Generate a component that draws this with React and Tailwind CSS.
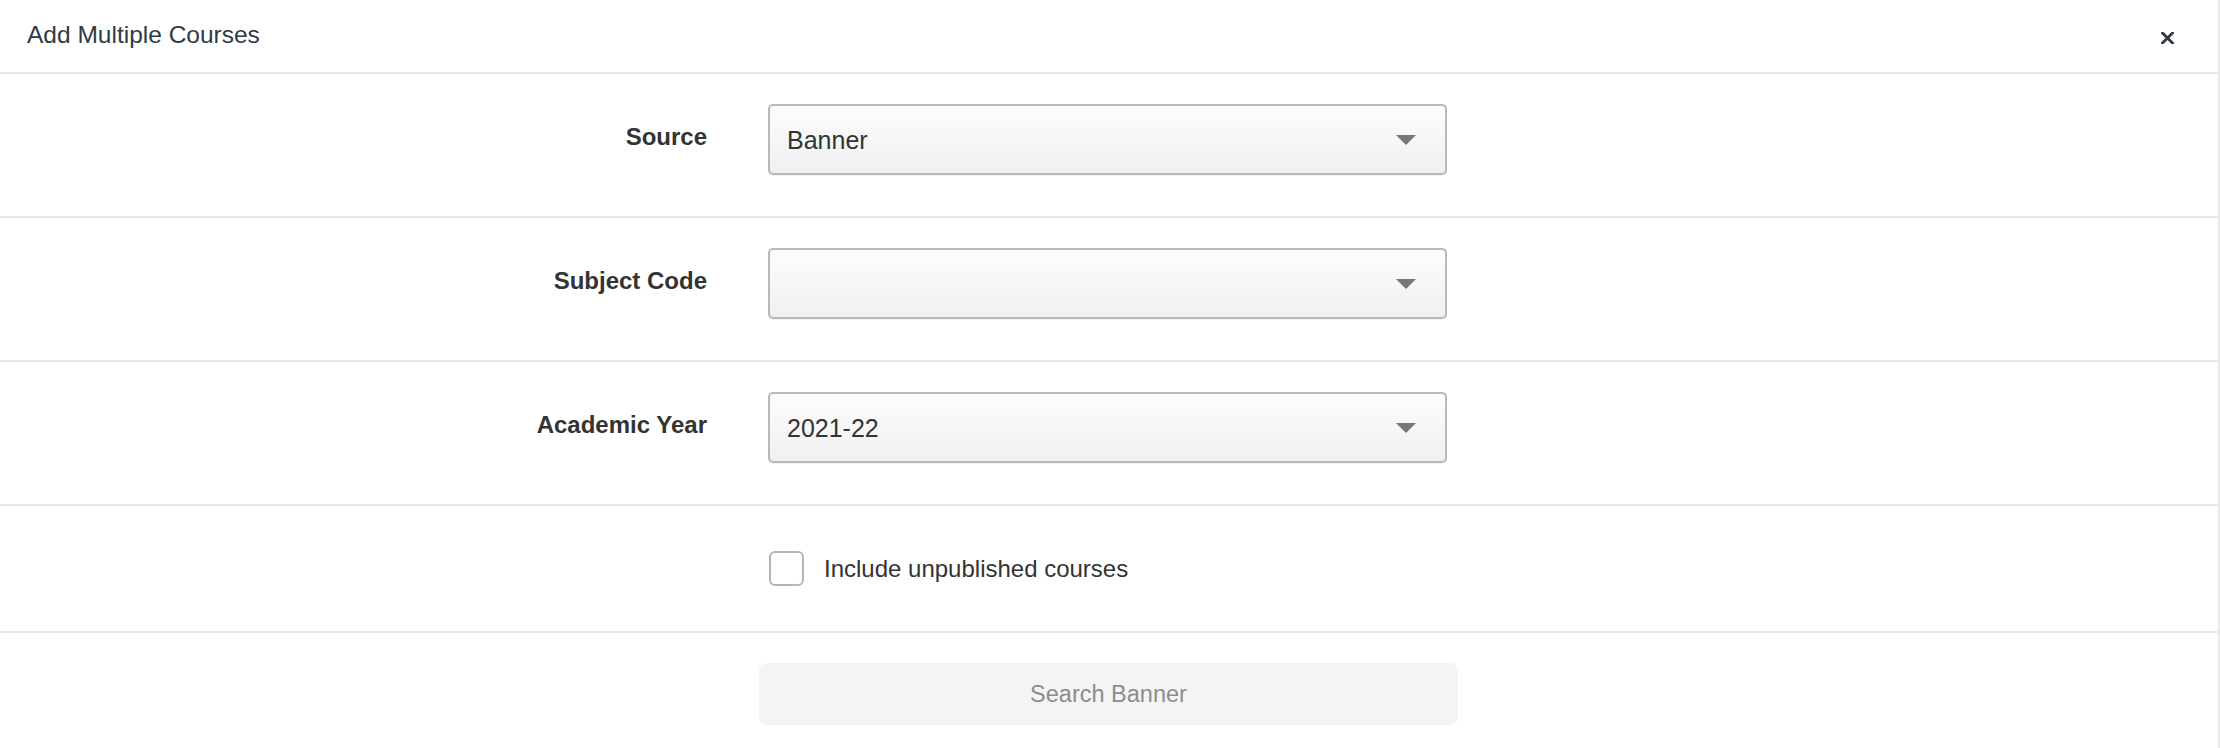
import React from "react";

function Arrow() {
  return (
    <svg width="20" height="10" viewBox="0 0 20 10" className="shrink-0">
      <polygon points="0,0 20,0 10,10" fill="#777777" />
    </svg>
  );
}

function SelectBox({ value }) {
  return (
    <div className="w-[679px] h-[71px] flex items-center justify-between border-2 border-[#b9b9b9] rounded-[5px] bg-linear-to-b from-[#fdfdfd] to-[#f0f0f0] shadow-[0_1px_1px_rgba(0,0,0,0.06)] pl-[17px] pr-[29px]">
      <span className="text-[25px] leading-[30px] text-[#333333]">{value}</span>
      <Arrow />
    </div>
  );
}

function FieldRow({ label, value }) {
  return (
    <div className="flex items-start pt-[30px] pb-[41px] border-b-2 border-[#e8e8e8]">
      <div className="w-[707px] shrink-0 text-right mt-[19px] text-[24px] leading-[27px] font-bold text-[#333333]">
        {label}
      </div>
      <div className="ml-[61px]">
        <SelectBox value={value} />
      </div>
    </div>
  );
}

export default function App() {
  return (
    <div
      className="w-[2220px] h-[748px] bg-white border-r-2 border-[#e8e8e8] overflow-hidden flex flex-col"
      style={{ fontFamily: '"Liberation Sans", Arial, Helvetica, sans-serif' }}
    >
      <div className="h-[74px] shrink-0 flex items-start justify-between border-b-2 border-[#e8e8e8] pl-[27px] pr-[44px] pt-[20px]">
        <h1 className="text-[24.5px] leading-[30px] font-normal text-[#2d3b45]">Add Multiple Courses</h1>
        <button className="mt-[11px] w-[14px] h-[14px] flex items-center justify-center" aria-label="Close">
          <svg width="13" height="12" viewBox="0 0 13 12">
            <path d="M1.5 1 L11.5 11 M11.5 1 L1.5 11" stroke="#2d3b45" strokeWidth="2.8" strokeLinecap="square" />
          </svg>
        </button>
      </div>

      <FieldRow label="Source" value="Banner" />
      <FieldRow label="Subject Code" value="" />
      <FieldRow label="Academic Year" value="2021-22" />

      <div className="h-[127px] shrink-0 flex items-center border-b-2 border-[#e8e8e8]">
        <div className="w-[707px] shrink-0" />
        <label className="ml-[62px] flex items-center gap-[20px]">
          <span className="w-[35px] h-[35px] border-2 border-[#b5b5b5] rounded-[6px] bg-white shrink-0" />
          <span className="text-[24px] leading-[30px] text-[#333333]">Include unpublished courses</span>
        </label>
      </div>

      <div className="flex items-start pt-[30px]">
        <div className="w-[707px] shrink-0" />
        <button className="ml-[52px] w-[699px] h-[62px] rounded-[8px] bg-[#f4f4f4] flex items-center justify-center text-[23.5px] leading-[30px] text-[#8c8c8c]">
          Search Banner
        </button>
      </div>
    </div>
  );
}
